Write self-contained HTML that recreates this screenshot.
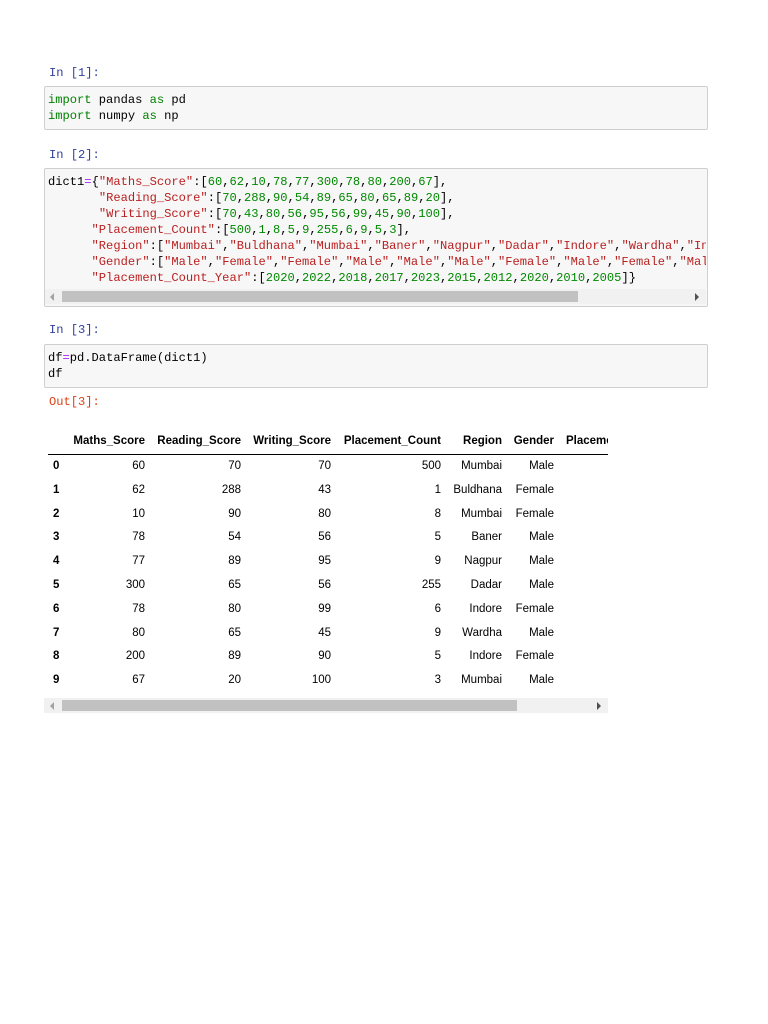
<!DOCTYPE html>
<html><head><style>
body{margin:0;width:768px;height:1024px;background:#fff;position:relative;overflow:hidden;font-family:"Liberation Sans",sans-serif}
.p{position:absolute;font-family:"Liberation Mono",monospace;font-size:12.1px;line-height:16px;white-space:pre}
.in{color:#303f9f}.out{color:#d84315}
.box{position:absolute;left:44px;width:662px;background:#f7f7f7;border:1px solid #cfcfcf;border-radius:2px;overflow:hidden}
.k{color:#008000}.s{color:#ba2121}.n{color:#080}.o{color:#aa22ff}
.sb{position:absolute;height:15px;background:#f1f1f1}
.th{position:absolute;height:11px;background:#c1c1c1;top:2px}
.t{position:absolute;font-size:11.5px;line-height:14px;color:#000;text-align:right}
.b{font-weight:bold}
</style></head><body>
<div class="p in" style="left:49px;top:65px">In [1]:</div>
<div class="box" style="top:86px;height:42px"></div>
<div class="p" style="left:48px;top:92px"><span class="k">import</span> pandas <span class="k">as</span> pd
<span class="k">import</span> numpy <span class="k">as</span> np</div>

<div class="p in" style="left:49px;top:147px">In [2]:</div>
<div class="box" style="top:168px;height:137px"></div>
<div class="p" style="left:48px;top:174px;width:658px;overflow:hidden">dict1<span class="o">=</span>{<span class="s">"Maths_Score"</span>:[<span class="n">60</span>,<span class="n">62</span>,<span class="n">10</span>,<span class="n">78</span>,<span class="n">77</span>,<span class="n">300</span>,<span class="n">78</span>,<span class="n">80</span>,<span class="n">200</span>,<span class="n">67</span>],
       <span class="s">"Reading_Score"</span>:[<span class="n">70</span>,<span class="n">288</span>,<span class="n">90</span>,<span class="n">54</span>,<span class="n">89</span>,<span class="n">65</span>,<span class="n">80</span>,<span class="n">65</span>,<span class="n">89</span>,<span class="n">20</span>],
       <span class="s">"Writing_Score"</span>:[<span class="n">70</span>,<span class="n">43</span>,<span class="n">80</span>,<span class="n">56</span>,<span class="n">95</span>,<span class="n">56</span>,<span class="n">99</span>,<span class="n">45</span>,<span class="n">90</span>,<span class="n">100</span>],
      <span class="s">"Placement_Count"</span>:[<span class="n">500</span>,<span class="n">1</span>,<span class="n">8</span>,<span class="n">5</span>,<span class="n">9</span>,<span class="n">255</span>,<span class="n">6</span>,<span class="n">9</span>,<span class="n">5</span>,<span class="n">3</span>],
      <span class="s">"Region"</span>:[<span class="s">"Mumbai"</span>,<span class="s">"Buldhana"</span>,<span class="s">"Mumbai"</span>,<span class="s">"Baner"</span>,<span class="s">"Nagpur"</span>,<span class="s">"Dadar"</span>,<span class="s">"Indore"</span>,<span class="s">"Wardha"</span>,<span class="s">"Indore"</span>],
      <span class="s">"Gender"</span>:[<span class="s">"Male"</span>,<span class="s">"Female"</span>,<span class="s">"Female"</span>,<span class="s">"Male"</span>,<span class="s">"Male"</span>,<span class="s">"Male"</span>,<span class="s">"Female"</span>,<span class="s">"Male"</span>,<span class="s">"Female"</span>,<span class="s">"Male"</span>],
      <span class="s">"Placement_Count_Year"</span>:[<span class="n">2020</span>,<span class="n">2022</span>,<span class="n">2018</span>,<span class="n">2017</span>,<span class="n">2023</span>,<span class="n">2015</span>,<span class="n">2012</span>,<span class="n">2020</span>,<span class="n">2010</span>,<span class="n">2005</span>]}</div>
<div class="sb" style="left:45px;top:289px;width:661px"><div class="th" style="left:17px;width:516px"></div>
<div style="position:absolute;left:5px;top:4px;border:4px solid transparent;border-right:4px solid #a3a3a3;border-left:0"></div>
<div style="position:absolute;left:650px;top:4px;border:4px solid transparent;border-left:4px solid #505050;border-right:0"></div></div>

<div class="p in" style="left:49px;top:322px">In [3]:</div>
<div class="box" style="top:344px;height:42px"></div>
<div class="p" style="left:48px;top:350px">df<span class="o">=</span>pd.DataFrame(dict1)
df</div>
<div class="p out" style="left:49px;top:394px">Out[3]:</div>

<div style="position:absolute;left:48px;top:454px;width:560px;height:1px;background:#000"></div>
<div class="t b" style="left:50px;top:434px;width:95px">Maths_Score</div>
<div class="t b" style="left:140px;top:434px;width:101px">Reading_Score</div>
<div class="t b" style="left:236px;top:434px;width:95px">Writing_Score</div>
<div class="t b" style="left:326px;top:434px;width:115px">Placement_Count</div>
<div class="t b" style="left:440px;top:434px;width:62px">Region</div>
<div class="t b" style="left:495px;top:434px;width:59px">Gender</div>
<div class="t b" style="left:566px;top:434px;width:42px;text-align:left;overflow:hidden;white-space:nowrap">Placement_Count_Year</div>
<div id="rows"></div>
<script>
var d=[[60,70,70,500,"Mumbai","Male"],[62,288,43,1,"Buldhana","Female"],[10,90,80,8,"Mumbai","Female"],[78,54,56,5,"Baner","Male"],[77,89,95,9,"Nagpur","Male"],[300,65,56,255,"Dadar","Male"],[78,80,99,6,"Indore","Female"],[80,65,45,9,"Wardha","Male"],[200,89,90,5,"Indore","Female"],[67,20,100,3,"Mumbai","Male"]];
var R=[145,241,331,441,502,554],h="";
d.forEach(function(r,i){var y=459+i*23.8;
h+='<div class="t b" style="left:53px;top:'+y+'px;text-align:left">'+i+'</div>';
r.forEach(function(v,j){h+='<div class="t" style="left:'+(R[j]-100)+'px;width:100px;top:'+y+'px">'+v+'</div>';});});
document.getElementById("rows").innerHTML=h;
</script>
<div class="sb" style="left:44px;top:698px;width:564px"><div class="th" style="left:18px;width:455px"></div>
<div style="position:absolute;left:6px;top:4px;border:4px solid transparent;border-right:4px solid #a3a3a3;border-left:0"></div>
<div style="position:absolute;left:553px;top:4px;border:4px solid transparent;border-left:4px solid #505050;border-right:0"></div></div>
</body></html>
